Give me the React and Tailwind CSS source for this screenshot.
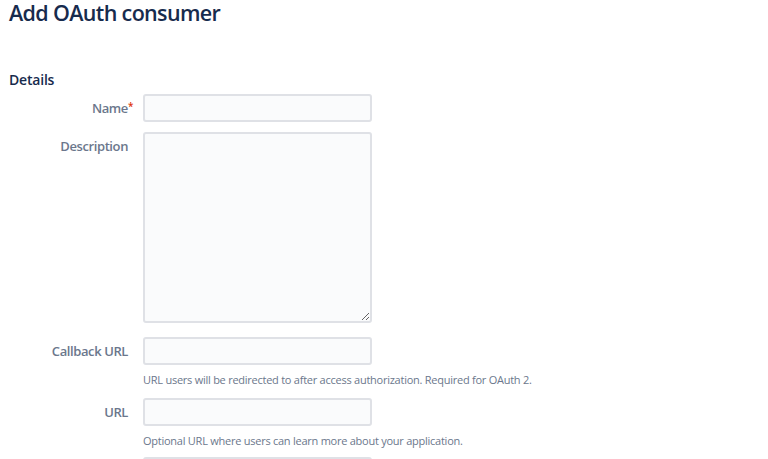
import React from 'react';

const font = { fontFamily: '"Open Sans", "Noto Sans", sans-serif' };

const Field = ({ label, required, children, help, className }) => (
    <div className={`flex items-start ${className || ''}`}>
        <label className="w-[128px] shrink-0 text-right text-[13px] font-semibold text-[#6b778c] leading-[28px] tracking-[-0.4px] whitespace-nowrap">
            {label}
            {required && <span className="relative text-[#de350b] text-[10px] align-top -mr-[5px] top-[-2px]">*</span>}
        </label>
        <div className="ml-[15px] flex flex-col">
            {children}
            {help && <p className="mt-[7px] text-[11px] text-[#6b778c] leading-[16px] tracking-[-0.25px] whitespace-nowrap">{help}</p>}
        </div>
    </div>
);

const inputCls = "w-[229px] h-[28px] bg-[#fafbfc] border-2 border-[#dfe1e6] rounded-[3px] outline-none";

export default function App() {
    return (
        <div className="w-[768px] h-[459px] overflow-hidden bg-white" style={font}>
            <div className="pl-[9px] pt-[1px]">
                {/* Page title */}
                <h1 className="text-[21.5px] font-semibold text-[#172b4d] leading-[30px] tracking-[-0.65px] -mt-[3px]">Add OAuth consumer</h1>

                {/* Details section */}
                <h2 className="mt-[40px] text-[14px] font-semibold text-[#172b4d] leading-[24px] tracking-[-0.2px]">Details</h2>
            </div>

            <div className="mt-[2px] flex flex-col">
                <Field label="Name" required>
                    <input className={inputCls} />
                </Field>

                <Field label="Description" className="mt-[10px]">
                    <textarea className="w-[229px] h-[191px] bg-[#fafbfc] border-2 border-[#dfe1e6] rounded-[3px] outline-none block" />
                </Field>

                <Field label="Callback URL" className="mt-[14px]" help="URL users will be redirected to after access authorization. Required for OAuth 2.">
                    <input className={inputCls} />
                </Field>

                <Field label="URL" className="mt-[10px]" help="Optional URL where users can learn more about your application.">
                    <input className={inputCls} />
                </Field>

                <Field label="" className="mt-[8px]">
                    <input className={inputCls} />
                </Field>
            </div>
        </div>
    );
}
